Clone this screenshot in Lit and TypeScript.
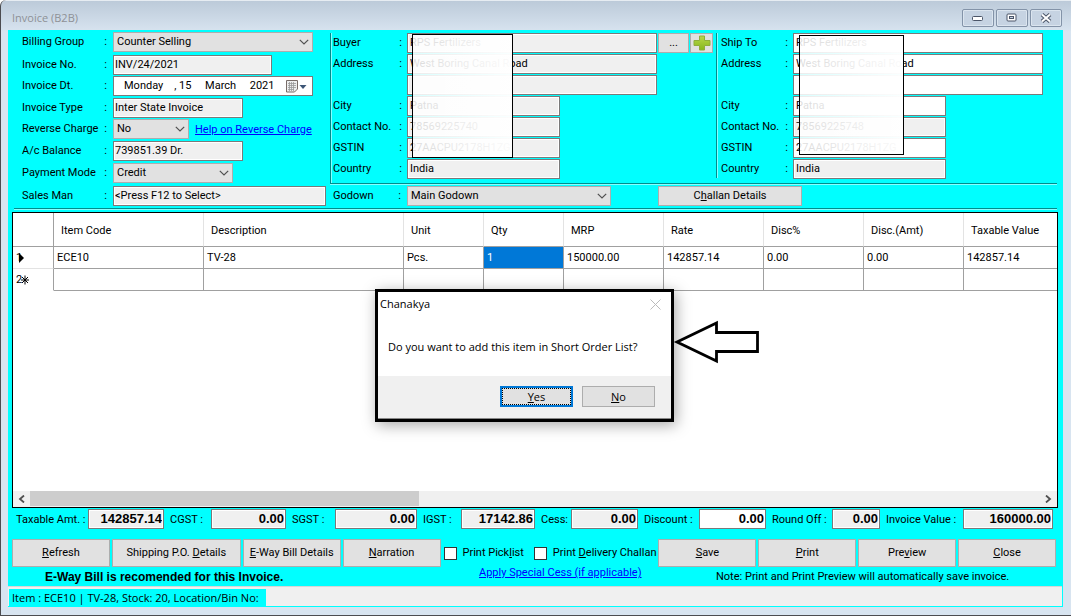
import { LitElement, html, svg, css, nothing } from "lit";
import { customElement, state } from "lit/decorators.js";
import { classMap } from "lit/directives/class-map.js";

const chevron = html`<svg class="chevron" width="10" height="6" viewBox="0 0 10 6" aria-hidden="true">
  <path d="M0.8 0.8 L5 5 L9.2 0.8" fill="none" stroke="#505050" stroke-width="1.2" />
</svg>`;

interface PartyRow {
  id: string;
  label: string;
  value: string;
  short?: boolean;
  white?: boolean;
}

const buyerRows: PartyRow[] = [
  { id: "name", label: "Buyer", value: "RPS Fertilizers" },
  { id: "addr", label: "Address", value: "West Boring Canal Road" },
  { id: "addr2", label: "", value: "" },
  { id: "city", label: "City", value: "Patna", short: true },
  { id: "contact", label: "Contact No.", value: "78569225740", short: true },
  { id: "gstin", label: "GSTIN", value: "27AACPU2178H1ZG", short: true },
  { id: "country", label: "Country", value: "India", short: true },
];

const shipRows: PartyRow[] = [
  { id: "name", label: "Ship To", value: "RPS Fertilizers", white: true },
  { id: "addr", label: "Address", value: "West Boring Canal Road", white: true },
  { id: "addr2", label: "", value: "", white: true },
  { id: "city", label: "City", value: "Patna", short: true, white: true },
  { id: "contact", label: "Contact No.", value: "78569225748", short: true },
  { id: "gstin", label: "GSTIN", value: "27AACPU2178H1ZG", short: true, white: true },
  { id: "country", label: "Country", value: "India", short: true },
];

const columns = ["Item Code", "Description", "Unit", "Qty", "MRP", "Rate", "Disc%", "Disc.(Amt)", "Taxable Value"];
const item = ["ECE10", "TV-28", "Pcs.", "1", "150000.00", "142857.14", "0.00", "0.00", "142857.14"];

const totals = [
  { label: "Taxable Amt. :", value: "142857.14" },
  { label: "CGST :", value: "0.00" },
  { label: "SGST :", value: "0.00" },
  { label: "IGST :", value: "17142.86" },
  { label: "Cess:", value: "0.00" },
  { label: "Discount :", value: "0.00", white: true },
  { label: "Round Off :", value: "0.00" },
  { label: "Invoice Value :", value: "160000.00" },
];

const gap = "\u00a0".repeat(5);
const invoiceDate = `Monday${"\u00a0".repeat(4)}, 15${gap}March${gap}2021`;

@customElement("app-root")
export class AppRoot extends LitElement {
  @state() private selected = 3;

  static styles = css`
    :host {
      display: block;
      --ui: Roboto, "Liberation Sans", sans-serif;
      --segoe: "Open Sans", "Noto Sans", sans-serif;
      font: 11px/14px var(--ui);
      color: #000;
    }
    * { box-sizing: border-box; }
    input, select, button { font: inherit; color: inherit; margin: 0; border-radius: 0; min-width: 0; }
    .window {
      display: flex;
      flex-direction: column;
      min-height: 100vh;
      padding: 0 8px 8px 7px;
      border-left: 1px solid #4c4c50;
      border-bottom: 1px solid #4c4c50;
      border-top-left-radius: 6px;
      background: linear-gradient(#e6ecf2 0 1px, #bccad9 1px, #d8e4f0 32px);
    }
    .titlebar {
      display: flex;
      align-items: center;
      justify-content: space-between;
      height: 30px;
      padding: 6px 1px 0 4px;
    }
    .titlebar h1 { margin: 0; font: 11px/16px var(--segoe); color: #8e9196; }
    .caption { display: flex; gap: 2px; }
    .caption button {
      display: grid;
      place-items: center;
      width: 32px;
      height: 18px;
      padding: 0;
      border: 1px solid #8393a8;
      border-radius: 2px;
      background: #c6d3e2;
      box-shadow: inset 0 0 0 1px #dbe5ef;
    }
    .body { display: flex; flex: 1; flex-direction: column; background: #0ff; }

    .upper {
      display: grid;
      grid-template-columns: 322px 386px minmax(0, 1fr);
      grid-template-rows: 153px 25px;
    }
    .details {
      grid-row: 1 / 3;
      display: grid;
      grid-template-columns: 91px minmax(0, 1fr);
      grid-template-rows: 23px 21px 22px 21px 22px 22px 23px 20px;
      padding: 2px 4px 0 14px;
    }
    .details label, .party label, .godown label {
      display: flex;
      justify-content: space-between;
      align-items: center;
      height: 20px;
      padding-right: 6px;
      white-space: nowrap;
    }
    .field { display: flex; align-items: flex-start; gap: 6px; }
    .text {
      height: 20px;
      padding: 0 1px 1px;
      border: 1px solid #7a7a7a;
      outline: 0;
      background: #f0f0f0;
      box-shadow: inset 0 0 0 1px #fff;
    }
    .text.white { background: #fff; }
    .w130 { width: 130px; }
    .w159 { width: 159px; }
    .w214 { width: 214px; }
    .combo { display: grid; height: 20px; }
    .combo > * { grid-area: 1 / 1; }
    .combo select {
      width: 100%;
      height: 20px;
      padding: 0 0 0 3px;
      border: 1px solid #adadad;
      appearance: none;
      background: #e1e1e1;
    }
    .chevron { place-self: center end; margin-right: 4px; pointer-events: none; }
    .w200 { width: 200px; }
    .w76 { width: 76px; }
    .w120 { width: 120px; }
    .w204 { width: 204px; }
    .date {
      display: flex;
      align-items: center;
      width: 200px;
      height: 20px;
      padding-right: 5px;
      border: 1px solid #7a7a7a;
      background: #fff;
    }
    .date input { flex: 1; padding: 0 0 0 10px; border: 0; background: none; outline: 0; }
    .date button { display: flex; padding: 0; border: 0; background: none; }
    a { color: #00f; text-decoration: underline; }
    .field a { line-height: 22px; }

    .party {
      position: relative;
      display: grid;
      grid-template-columns: 74px minmax(0, 1fr);
      grid-auto-rows: 20px;
      row-gap: 1px;
      align-content: start;
      margin-top: 3px;
      padding-left: 2px;
      border-left: 1px solid #008c8c;
      box-shadow: inset 1px 0 0 #8ff;
    }
    .ship { padding-left: 4px; margin-bottom: 5px; grid-template-columns: 72px minmax(0, 1fr); }
    .party .field { gap: 1px; align-items: stretch; }
    .party .text { width: 250px; padding-left: 2px; }
    .party .text.short { width: 153px; }
    .party label { padding-right: 5px; }
    .push {
      padding: 0;
      border: 1px solid #adadad;
      background: #e1e1e1;
      text-align: center;
      white-space: nowrap;
    }
    .more { width: 31px; }
    .add { display: grid; place-items: center; width: 23px; }
    .cover {
      position: absolute;
      top: 1px;
      left: 81px;
      width: 101px;
      height: 124px;
      border: 1px solid #000;
      background: linear-gradient(90deg, rgb(255 255 255 / 86%), rgb(255 255 255 / 92%) 50%, rgb(255 255 255 / 98%));
    }
    .ship .cover { left: 82px; width: 105px; height: 120px; top: 2px; }
    .godown {
      grid-column: 2 / 4;
      display: grid;
      grid-template-columns: 74px 204px 191px;
      margin-right: 6px;
      padding: 2px 0 0 3px;
      border-top: 1px solid #008c8c;
      box-shadow: inset 0 1px 0 #8ff;
    }
    .godown .push { height: 20px; margin-left: 47px; }

    .sheet {
      display: flex;
      flex: 1;
      flex-direction: column;
      margin: 0 5px 0 4px;
      border: 1px solid #000;
      background: #fff;
      overflow: hidden;
    }
    .rule { height: 2px; margin: 0 6px 2px; border-top: 1px solid #008c8c; background: #8ff; }
    .tablewrap { flex: 1; overflow: hidden; }
    table { width: 100%; border-collapse: separate; border-spacing: 0; table-layout: fixed; }
    th, td {
      padding: 0 3px;
      border: 0 solid #a0a0a0;
      border-width: 0 1px 1px 0;
      font-weight: 400;
      text-align: left;
      white-space: nowrap;
      overflow: hidden;
    }
    thead th { height: 34px; padding: 2px 7px 0; border-right-color: #e3e3e3; }
    thead th:first-child { border-right-color: #a0a0a0; }
    tbody tr { height: 22px; }
    tbody th { border-bottom-color: #e3e3e3; }
    tbody tr:last-child th { border-bottom-color: #fff; }
    th:last-child, td:last-child { border-right: 0; }
    .selected { background: #0078d7; color: #fff; }
    .mark { display: flex; align-items: center; }
    .mark svg { margin-left: -4px; }
    .c0 { width: 41px; }
    .c1 { width: 150px; }
    .c2 { width: 200px; }
    .c3, .c4 { width: 80px; }
    .c5, .c6, .c7, .c8 { width: 100px; }
    .scroll { display: flex; align-items: stretch; height: 16px; background: #f0f0f0; }
    .scroll button { display: grid; place-items: center; width: 17px; padding: 0; border: 0; background: none; }
    .track { flex: 1; }
    .thumb { width: 38.5%; height: 15px; background: #cdcdcd; }

    .totals {
      display: grid;
      grid-template-columns: 72px 76fr 47px 75fr 49px 82fr 44px 74fr 36px 67fr 61px 67fr 66px 48fr 83px 90fr;
      grid-template-rows: 20px;
      margin: 1px 10px 10px 8px;
    }
    .totals label { padding-left: 6px; line-height: 22px; white-space: nowrap; }
    .totals label:first-child { padding-left: 0; }
    .totals .text { width: 100%; font: bold 13px/16px "Liberation Sans", Arial, sans-serif; text-align: right; }

    .actions {
      display: grid;
      grid-template-columns: 98fr 129fr 98fr 98fr 211fr 98fr 98fr 98fr 98fr;
      column-gap: 2px;
      margin: 0 7px 0 4px;
    }
    .actions .push { height: 28px; }
    .checks { display: flex; align-items: center; gap: 10px; padding-left: 1px; }
    .checks label { display: flex; align-items: center; gap: 6px; white-space: nowrap; }
    .checks input { appearance: none; width: 13px; height: 13px; border: 1px solid #333; background: #fff; }
    .notes {
      display: grid;
      grid-template-columns: 467px minmax(0, 1fr) 347px;
      height: 19px;
      line-height: 20px;
      white-space: nowrap;
    }
    .notes strong { padding-left: 37px; font: bold 12px/20px "Liberation Sans", Arial, sans-serif; }
    .notes a { display: inline-block; padding-left: 4px; line-height: 12px; vertical-align: top; }
    .status {
      height: 21px;
      padding: 3px 1px 0;
      border: 1px solid #0ff;
      border-width: 0 1px 1px 0;
      background: #f0f0f0;
      box-shadow: inset 0 1px 0 #d7d7d7;
    }
    .status span { display: block; width: fit-content; padding: 0 7px 0 3px; background: #0ff; font: 11px/17px var(--segoe); }

    .dialog {
      position: absolute;
      top: 289px;
      left: 375px;
      width: 299px;
      border: 3px solid #000;
      background: #fff;
      box-shadow: 2px 3px 14px rgb(0 0 0 / 35%);
      font: 11px/16px var(--segoe);
    }
    .dialog header { display: flex; align-items: center; justify-content: space-between; height: 24px; padding: 0 10px 0 2px; }
    .dialog h2 { margin: 0; font: inherit; }
    .dialog header button { display: flex; padding: 0; border: 0; background: none; }
    .dialog p { margin: 0; padding: 23px 10px 21px; white-space: nowrap; }
    .dialog footer { display: flex; justify-content: flex-end; gap: 9px; height: 43px; padding: 10px 16px; background: #f0f0f0; border-bottom: 1px solid #888; }
    .dialog .push { width: 73px; height: 21px; }
    .dialog .default { border: 2px solid #0078d7; outline: 1px dotted #000; outline-offset: -3px; }
    .arrow { position: absolute; top: 318px; left: 672px; }
  `;

  private combo(id: string, value: string, width: string) {
    return html`<span class="combo ${width}">
      <select id=${id}><option>${value}</option></select>${chevron}
    </span>`;
  }

  private party(prefix: string, rows: PartyRow[]) {
    return html`<section class="party ${prefix}">
      ${rows.map(
        (r, i) => html`
          ${r.label ? html`<label for="${prefix}-${r.id}"><span>${r.label}</span><span>:</span></label>` : html`<span></span>`}
          <div class="field">
            <input
              id="${prefix}-${r.id}"
              aria-label=${r.label || "Address line 2"}
              class=${classMap({ text: true, short: !!r.short, white: !!r.white })}
              .value=${r.value}
            />
            ${prefix === "buyer" && i === 0
              ? html`<button class="push more" aria-label="Browse buyers">...</button>
                  <button class="push add" aria-label="Add buyer">
                    <svg width="18" height="16" viewBox="0 0 18 16">
                      <defs><linearGradient id="leaf" x2="0" y2="1"><stop stop-color="#b9d84a" /><stop offset="1" stop-color="#86b71c" /></linearGradient></defs>
                      <path d="M6.5 1h5v4.5h5.5v5h-5.5v4.5h-5v-4.5H1v-5h5.500z" fill="url(#leaf)" stroke="#8fae3c" />
                    </svg>
                  </button>`
              : nothing}
          </div>
        `
      )}
      <div class="cover"></div>
    </section>`;
  }

  render() {
    return html`
      <main class="window">
        <header class="titlebar">
          <h1>Invoice (B2B)</h1>
          <div class="caption">
            <button aria-label="Minimize"><svg width="12" height="6"><rect x=".5" y="1.5" width="10" height="4" rx="1" fill="#fff" stroke="#4b5568" /></svg></button>
            <button aria-label="Restore"><svg width="12" height="10"><rect x="1" y="1" width="9" height="7" rx="1" fill="#fff" stroke="#4b5568" /><rect x="3.500" y="3.500" width="4" height="2" fill="#c6d3e2" stroke="#4b5568" /></svg></button>
            <button aria-label="Close window"><svg width="12" height="10" viewBox="0 0 12 10"><path d="M2 1.500 10 8.500M10 1.500 2 8.500" stroke="#4b5568" stroke-width="4" /><path d="M2 1.500 10 8.500M10 1.500 2 8.500" stroke="#fff" stroke-width="2" /></svg></button>
          </div>
        </header>

        <div class="body">
          <div class="upper">
            <section class="details">
              <label for="group"><span>Billing Group</span><span>:</span></label>
              <div class="field">${this.combo("group", "Counter Selling", "w200")}</div>
              <label for="number"><span>Invoice No.</span><span>:</span></label>
              <div class="field"><input id="number" class="text w159" value="INV/24/2021" /></div>
              <label for="date"><span>Invoice Dt.</span><span>:</span></label>
              <div class="field">
                <span class="date">
                  <input id="date" .value=${invoiceDate} />
                  <button aria-label="Open calendar">
                    <svg width="21" height="13" viewBox="0 0 21 13">
                      <path d="M.5.5h11v8.500l-3 3h-8z" fill="#eee" stroke="#776c68" />
                      <path d="M2 3.500h8M2 5.500h8M2 7.500h8M2 9.500h6M3.500 2v9M5.500 2v9M7.500 2v9" stroke="#999" stroke-width=".8" />
                      <path d="M13.500 5h7L17 9z" fill="#3d5676" />
                    </svg>
                  </button>
                </span>
              </div>
              <label for="type"><span>Invoice Type</span><span>:</span></label>
              <div class="field"><input id="type" class="text w130" value="Inter State Invoice" /></div>
              <label for="reverse"><span>Reverse Charge</span><span>:</span></label>
              <div class="field">${this.combo("reverse", "No", "w76")}<a href="#reverse">Help on Reverse Charge</a></div>
              <label for="balance"><span>A/c Balance</span><span>:</span></label>
              <div class="field"><input id="balance" class="text w130" value="739851.39 Dr." /></div>
              <label for="mode"><span>Payment Mode</span><span>:</span></label>
              <div class="field">${this.combo("mode", "Credit", "w120")}</div>
              <label for="sales"><span>Sales Man</span><span>:</span></label>
              <div class="field"><input id="sales" class="text w214" value="<Press F12 to Select>" /></div>
            </section>

            ${this.party("buyer", buyerRows)} ${this.party("ship", shipRows)}

            <div class="godown">
              <label for="godown"><span>Godown</span><span>:</span></label>
              ${this.combo("godown", "Main Godown", "w204")}
              <button class="push">C<u>h</u>allan Details</button>
            </div>
          </div>
          <div class="rule"></div>

          <section class="sheet">
            <div class="tablewrap">
              <table>
                <colgroup>
                  ${[0, 1, 2, 3, 4, 5, 6, 7, 8].map((i) => html`<col class="c${i}" />`)}<col />
                </colgroup>
                <thead>
                  <tr><th></th>${columns.map((c) => html`<th scope="col">${c}</th>`)}</tr>
                </thead>
                <tbody>
                  <tr>
                    <th scope="row"><span class="mark">1<svg width="7" height="10"><path d="M1 0 6 5 1 10z" /></svg></span></th>
                    ${item.map((v, i) => html`<td class=${classMap({ selected: i === this.selected })} @click=${() => (this.selected = i)}>${v}</td>`)}
                  </tr>
                  <tr>
                    <th scope="row"><span class="mark">2<svg width="13" height="10" viewBox="-2 0 13 10"><path d="M5 .5v9M1 5h8M2 2l6 6M8 2 2 8" stroke="#000" /></svg></span></th>
                    ${item.map(() => html`<td></td>`)}
                  </tr>
                </tbody>
              </table>
            </div>
            <div class="scroll">
              <button aria-label="Scroll left"><svg width="7" height="8"><path d="M6 .5 2 4l4 3.500" fill="none" stroke="#505050" stroke-width="1.800" /></svg></button>
              <div class="track"><div class="thumb"></div></div>
              <button aria-label="Scroll right"><svg width="7" height="8"><path d="M1 .5 5 4 1 7.500" fill="none" stroke="#505050" stroke-width="1.800" /></svg></button>
            </div>
          </section>

          <section class="totals">
            ${totals.map(
              (t, i) => html`<label for="total-${i}">${t.label}</label>
                <input id="total-${i}" class=${classMap({ text: true, white: !!t.white })} .value=${t.value} />`
            )}
          </section>

          <section class="actions">
            <button class="push"><u>R</u>efresh</button>
            <button class="push">Shipping P.O. <u>D</u>etails</button>
            <button class="push"><u>E</u>-Way Bill Details</button>
            <button class="push"><u>N</u>arration</button>
            <div class="checks">
              <label><input type="checkbox" /><span>Print Pick<u>l</u>ist</span></label>
              <label><input type="checkbox" /><span>Print <u>D</u>elivery Challan</span></label>
            </div>
            <button class="push"><u>S</u>ave</button>
            <button class="push"><u>P</u>rint</button>
            <button class="push">Pre<u>v</u>iew</button>
            <button class="push"><u>C</u>lose</button>
          </section>
          <section class="notes">
            <strong>E-Way Bill is recomended for this Invoice.</strong>
            <span><a href="#cess">Apply Special Cess (if applicable)</a></span>
            <span>Note: Print and Print Preview will automatically save invoice.</span>
          </section>
          <footer class="status"><span>Item : ECE10 | TV-28, Stock: 20, Location/Bin No:</span></footer>
        </div>
      </main>

      <section class="dialog" role="dialog" aria-label="Chanakya">
        <header>
          <h2>Chanakya</h2>
          <button aria-label="Close dialog"><svg width="11" height="11"><path d="M.5.5l10 10M10.500.5l-10 10" stroke="#bbb" /></svg></button>
        </header>
        <p>Do you want to add this item in Short Order List?</p>
        <footer>
          <button class="push default"><u>Y</u>es</button>
          <button class="push"><u>N</u>o</button>
        </footer>
      </section>
      <svg class="arrow" width="90" height="48" viewBox="672 318 90 48" aria-hidden="true">
        ${svg`<path d="M677 342 716.500 323v9.500H757.500v19H716.500V361z" fill="#fff" stroke="#000" stroke-width="2.800" />`}
      </svg>
    `;
  }
}
